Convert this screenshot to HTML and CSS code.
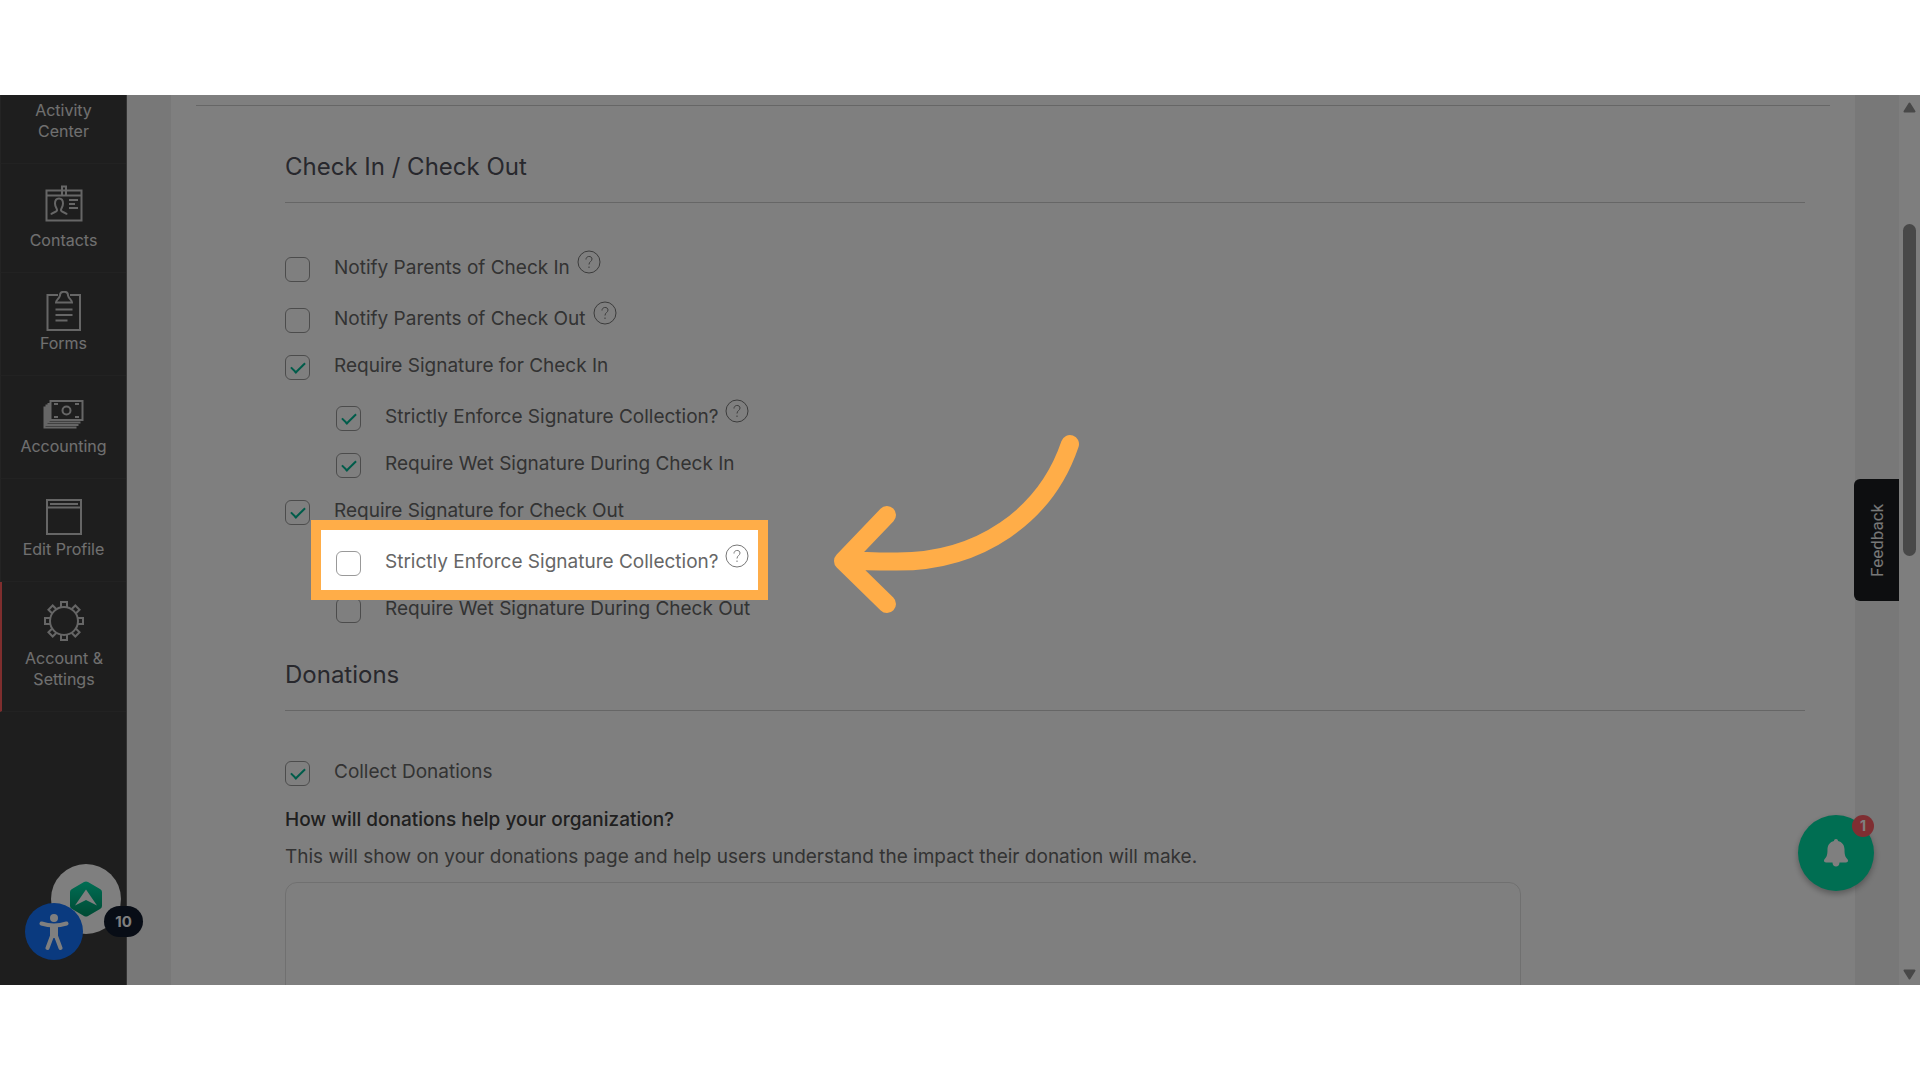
FILE: index.html
```
<!DOCTYPE html>
<html lang="en">
<head>
    <meta charset="UTF-8">
    <meta name="viewport" content="width=device-width, initial-scale=1.0">
    <link rel="stylesheet" href="styles.css">

    <title>Account &amp; Settings</title>

</head>
<body>

    <div class="stage">
        <nav class="sidebar">
            <a href="#" class="nav-item first">Activity<br>Center</a>
            <a href="#" class="nav-item spaced">
                <svg viewBox="0 0 42 42">
                    <path d="M3.5 8.500h35v30h-35zM3.500 13.500h35M19 13V4.500h4V13"/>
                    <path d="M8 32.500c1-2 5-2 6-4 .5-2-2-3-2-7 0-3.500 1.500-5 4-5s4 1.500 4 5c0 4-2.500 5-2 7 1 2 5 2 6 4M26 18h9M26 22h6M26 26h9"/>
                </svg>
                Contacts
            </a>
            <a href="#" class="nav-item">
                <svg viewBox="0 0 42 42">
                    <path d="M15 4H4.500v35h32.500V4H27"/>
                    <path d="M13 11.500h16c0-3-3-3-4-7 0-5-8-5-8 0-1 4-4 4-4 7zM12.500 18.500h17M12.500 24h17M12.500 29.500h12"/>
                </svg>
                Forms
            </a>
            <a href="#" class="nav-item">
                <svg viewBox="0 0 42 42">
                    <path d="M7.500 7h32v19H7.500zM5.500 9v19.500h32M3.500 10.500V31h32M1.500 12.500V33.500h32"/>
                    <circle cx="23.500" cy="16.500" r="4"/>
                    <path d="M11 10h4M32 10h4M11 23h4M32 23h4"/>
                </svg>
                Accounting
            </a>
            <a href="#" class="nav-item">
                <svg viewBox="0 0 42 42">
                    <path d="M4 3h34v34H4zM4 10.500h34M7 7h28"/>
                </svg>
                Edit Profile
            </a>
            <a href="#" class="nav-item spaced active">
                <svg viewBox="0 0 42 42">
                    <circle cx="21" cy="21" r="14"/>
                    <path id="tooth" d="M18 7V2h6v5"/>
                    <use href="#tooth" transform="rotate(45 21 21)"/>
                    <use href="#tooth" transform="rotate(90 21 21)"/>
                    <use href="#tooth" transform="rotate(135 21 21)"/>
                    <use href="#tooth" transform="rotate(180 21 21)"/>
                    <use href="#tooth" transform="rotate(225 21 21)"/>
                    <use href="#tooth" transform="rotate(270 21 21)"/>
                    <use href="#tooth" transform="rotate(315 21 21)"/>
                </svg>
                Account &amp;<br>Settings
            </a>
        </nav>

        <main class="page">
            <form class="panel">
                <section class="settings">
                    <h2>Check In / Check Out</h2>
                    <div class="row has-help">
                        <input type="checkbox" id="notifyIn">
                        <label for="notifyIn">Notify Parents of Check In</label>
                        <svg class="help" viewBox="0 0 24 24"><circle cx="12" cy="12" r="11"/><path d="M9 9.500c0-4 6-4 6-.5 0 2.500-3 2.500-3 5.500M12 16.500v1.500"/></svg>
                    </div>
                    <div class="row has-help">
                        <input type="checkbox" id="notifyOut">
                        <label for="notifyOut">Notify Parents of Check Out</label>
                        <svg class="help" viewBox="0 0 24 24"><circle cx="12" cy="12" r="11"/><path d="M9 9.500c0-4 6-4 6-.5 0 2.500-3 2.500-3 5.500M12 16.500v1.500"/></svg>
                    </div>
                    <div class="row">
                        <input type="checkbox" id="signIn" checked>
                        <label for="signIn">Require Signature for Check In</label>
                    </div>
                    <div class="row nested has-help">
                        <input type="checkbox" id="strictIn" checked>
                        <label for="strictIn">Strictly Enforce Signature Collection?</label>
                        <svg class="help" viewBox="0 0 24 24"><circle cx="12" cy="12" r="11"/><path d="M9 9.500c0-4 6-4 6-.5 0 2.500-3 2.500-3 5.500M12 16.500v1.500"/></svg>
                    </div>
                    <div class="row nested">
                        <input type="checkbox" id="wetIn" checked>
                        <label for="wetIn">Require Wet Signature During Check In</label>
                    </div>
                    <div class="row">
                        <input type="checkbox" id="signOut" checked>
                        <label for="signOut">Require Signature for Check Out</label>
                    </div>
                    <div class="row nested has-help target">
                        <input type="checkbox" id="strictOut">
                        <label for="strictOut">Strictly Enforce Signature Collection?</label>
                        <svg class="help" viewBox="0 0 24 24"><circle cx="12" cy="12" r="11"/><path d="M9 9.500c0-4 6-4 6-.5 0 2.500-3 2.500-3 5.500M12 16.500v1.500"/></svg>
                        <!-- the spotlight's shadow dims everything else -->
                        <div class="spotlight"></div>
                        <svg class="pointer" viewBox="0 0 280 210">
                            <path d="M250 24C226 95 160 143 73 141.500 55 141.500 38 141 24 140M67 95L23 141L67 184"/>
                        </svg>
                    </div>
                    <div class="row nested">
                        <input type="checkbox" id="wetOut">
                        <label for="wetOut">Require Wet Signature During Check Out</label>
                    </div>

                    <h2 class="second">Donations</h2>
                    <div class="row">
                        <input type="checkbox" id="collect" checked>
                        <label for="collect">Collect Donations</label>
                    </div>
                    <label for="impact" class="question">How will donations help your organization?</label>
                    <p class="hint">This will show on your donations page and help users understand the impact their donation will make.</p>
                    <textarea id="impact" name="impact"></textarea>
                </section>
            </form>
        </main>

        <div class="scrollbar">
            <svg viewBox="0 0 13 11"><path d="M6.500 1.500L11.500 9.500h-10z"/></svg>
            <div class="thumb"></div>
            <svg viewBox="0 0 13 11"><path d="M6.500 9.500L11.500 1.500h-10z"/></svg>
        </div>

        <button type="button" class="feedback">Feedback</button>

        <button type="button" class="bell" aria-label="Notifications">
            <svg viewBox="0 0 24 28"><path d="M12 0c1.200 0 2 .8 2 2 4 1 6.500 4 6.500 8.500 0 6 1 7.500 2.800 9.500 1.400 1.600.6 3.500-1.300 3.500h-6.500c0 2.500-1.500 4-3.500 4s-3.500-1.500-3.500-4H2c-1.900 0-2.700-1.900-1.300-3.500C2.500 18 3.500 16.500 3.500 10.500 3.500 6 6 3 10 2c0-1.200.8-2 2-2z"/></svg>
            <span class="count">1</span>
        </button>

        <button type="button" class="guide" aria-label="Guides">
            <svg viewBox="0 0 32 36">
                <defs>
                    <linearGradient id="hex" x1="0" y1="0" x2="0" y2="1">
                        <stop offset="0" stop-color="#00dca8"/>
                        <stop offset="1" stop-color="#009468"/>
                    </linearGradient>
                </defs>
                <path d="M14 1q2-1 4 0l12 7q2 1 2 3v14q0 2-2 3l-12 7q-2 1-4 0L2 28q-2-1-2-3V11q0-2 2-3z" fill="url(#hex)"/>
                <path d="M16 8.500L27 24.500 16 19 5 24.500z" fill="#fff"/>
            </svg>
            <span class="guide-count">10</span>
        </button>

        <button type="button" class="access" aria-label="Accessibility">
            <svg viewBox="0 0 30 38">
                <circle cx="15" cy="5" r="4"/>
                <path d="M2.500 10.500Q15 14.500 27.500 10.500M15 13v10M13 13v10L8.500 35M17 13v10L21.500 35"/>
            </svg>
        </button>
    </div>

</body>
</html>
```

FILE: styles.css
```
* {
    box-sizing: border-box;
}

body {
    margin: 0;
    padding: 95px 0;
    height: 100vh;
    background-color: #fff;
    font-family: Inter, 'Liberation Sans', sans-serif;
    font-size: 19px;
    line-height: 21px;
    color: #666;
}

button {
    border: none;
    padding: 0;
    font-family: inherit;
    cursor: pointer;
}

.stage {
    position: relative;
    display: flex;
    height: 100%;
    overflow: hidden;
    background-color: #f0f0f0;
}

/* Sidebar */
.sidebar {
    flex: none;
    width: 127px;
    background-color: #3c3c3c;
    border-right: 1px solid #666;
}

.nav-item {
    display: block;
    padding: 18px 0 21px;
    border-bottom: 1px solid #444;
    border-left: 1px solid #484848;
    color: #e0e0e0;
    font-size: 16px;
    text-align: center;
    text-decoration: none;
}

.nav-item.first {
    padding-top: 5px;
}

.nav-item.active {
    border-left: 2px solid #ff5c5c;
}

.nav-item svg {
    display: block;
    width: 42px;
    height: 42px;
    margin: 0 auto;
    fill: none;
    stroke: #ccc;
    stroke-width: 2;
}

.nav-item.spaced svg {
    margin-bottom: 6px;
}

/* Page */
.page {
    flex: 1;
    padding: 0 44px;
}

.panel {
    min-height: 100%;
    padding: 10px 25px 0;
    background-color: #fff;
}

.settings {
    padding: 47px 25px 0 89px;
    border-top: 1px solid #ccc;
}

h2 {
    margin: 0 0 50px;
    padding-bottom: 22px;
    border-bottom: 1px solid #ccc;
    color: #50505a;
    font-size: 24px;
    font-weight: 400;
    line-height: 27px;
}

h2.second {
    margin-top: 16px;
}

.row {
    display: flex;
    align-items: flex-start;
    padding-bottom: 22px;
}

.row.has-help {
    padding-top: 4px;
}

.row.nested {
    margin-left: 51px;
}

.row.target {
    position: relative;
}

input[type="checkbox"] {
    appearance: none;
    flex: none;
    width: 25px;
    height: 25px;
    margin: 0 24px 0 0;
    border: 1px solid #999;
    border-radius: 6px;
    background-color: #fff;
}

input[type="checkbox"]:checked::after {
    content: "";
    display: block;
    width: 6px;
    height: 12px;
    margin: 3px 0 0 8px;
    border: solid #00b894;
    border-width: 0 2px 2px 0;
    transform: rotate(45deg);
}

.help {
    width: 24px;
    height: 24px;
    margin: -7px 0 -3px 7px;
    fill: none;
    stroke: #777;
    stroke-width: 1;
}

.question {
    display: block;
    margin-top: 1px;
    font-weight: 500;
    color: #404040;
}

.hint {
    margin: 16px 0 15px;
}

textarea {
    display: block;
    width: 100%;
    max-width: 1236px;
    height: 160px;
    border: 1px solid #e0e0e0;
    border-radius: 12px;
    resize: none;
}

/* Tour overlay */
.spotlight {
    position: absolute;
    z-index: 10;
    top: -27px;
    left: -25px;
    width: 457px;
    height: 80px;
    border: 10px solid #ffad48;
    box-shadow: 0 0 0 3000px rgba(0, 0, 0, 0.5);
    pointer-events: none;
}

.pointer {
    position: absolute;
    z-index: 11;
    top: -127px;
    left: 484px;
    width: 280px;
    height: 210px;
    fill: none;
    stroke: #ffad48;
    stroke-width: 18;
    stroke-linecap: round;
    stroke-linejoin: round;
    pointer-events: none;
}

/* Scrollbar */
.scrollbar {
    flex: none;
    display: flex;
    flex-direction: column;
    align-items: center;
    width: 21px;
    padding: 7px 0 5px;
    background-color: #fcfcfc;
}

.scrollbar svg {
    width: 13px;
    height: 11px;
    fill: #909090;
    stroke: #909090;
    stroke-width: 2;
    stroke-linejoin: round;
}

.thumb {
    width: 13px;
    height: 332px;
    margin: 111px 0 auto;
    border-radius: 7px;
    background-color: #909090;
}

/* Floating buttons */
.feedback {
    position: absolute;
    top: 384px;
    right: 21px;
    width: 45px;
    height: 122px;
    border-radius: 0 6px 6px 0;
    background-color: #1a1d20;
    color: #eee;
    font-family: Roboto, sans-serif;
    font-size: 17px;
    writing-mode: vertical-rl;
    transform: rotate(180deg);
}

.bell {
    position: absolute;
    right: 46px;
    bottom: 94px;
    width: 76px;
    height: 76px;
    border-radius: 50%;
    background-color: #00dca4;
    box-shadow: 0 3px 6px rgba(0, 0, 0, 0.3);
}

.bell svg {
    display: block;
    width: 24px;
    height: 28px;
    margin: 0 auto;
    fill: #fff;
}

.count {
    position: absolute;
    top: 0;
    right: 0;
    width: 22px;
    height: 22px;
    border-radius: 50%;
    background-color: #ff5c64;
    color: #fff;
    font-size: 14px;
    font-weight: 700;
    line-height: 22px;
}

.guide {
    position: absolute;
    bottom: 51px;
    left: 51px;
    width: 70px;
    height: 70px;
    border-radius: 50%;
    background-color: #fff;
}

.guide svg {
    display: block;
    width: 32px;
    height: 36px;
    margin: 0 auto;
}

.guide-count {
    position: absolute;
    right: -22px;
    bottom: -3px;
    width: 39px;
    height: 31px;
    border-radius: 16px;
    background-color: #101a2c;
    color: #fff;
    font-size: 15px;
    font-weight: 700;
    line-height: 31px;
}

.access {
    position: absolute;
    bottom: 25px;
    left: 25px;
    width: 58px;
    height: 57px;
    border-radius: 50%;
    background-color: #1474ff;
}

.access svg {
    display: block;
    width: 30px;
    height: 38px;
    margin: 0 auto;
    fill: #fff;
}

.access path {
    fill: none;
    stroke: #fff;
    stroke-width: 4;
    stroke-linecap: round;
    stroke-linejoin: round;
}
```
